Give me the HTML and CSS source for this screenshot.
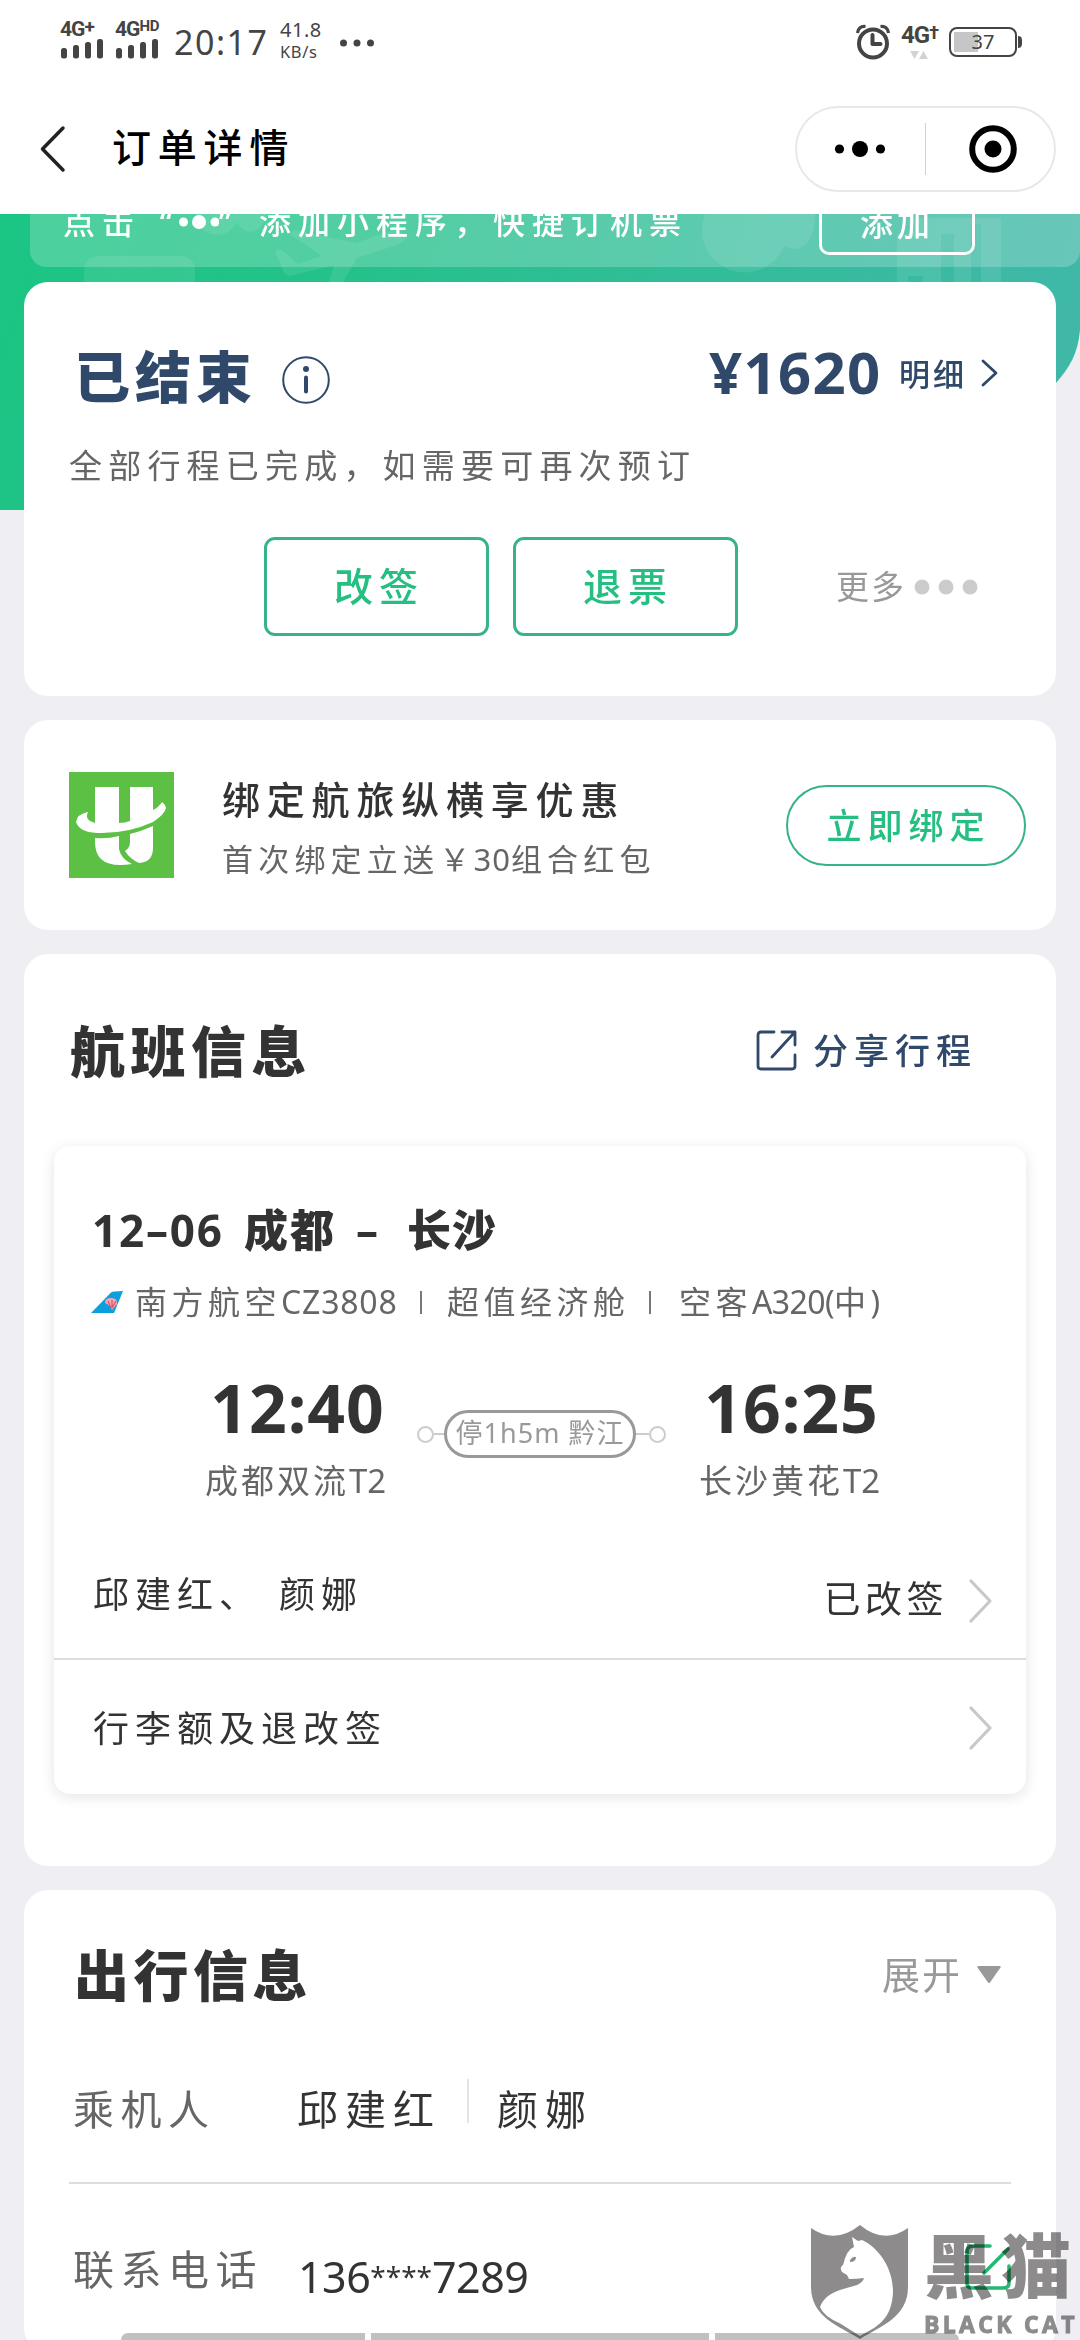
FILE: index.html
```html
<!DOCTYPE html>
<html lang="zh-CN">
<head>
<meta charset="utf-8">
<title>订单详情</title>
<link rel="stylesheet" href="styles.css">
</head>
<body>
<div class="screen">
  <header class="top">
    <div class="status">
      <div class="net net-a">
        <span class="net-label">4G<sup>+</sup></span>
        <svg width="44" height="20" viewBox="0 0 44 20" fill="#444"><rect x="1" y="9" width="6" height="10.500" rx="2.500"/><rect x="13" y="6" width="6" height="13.500" rx="2.500"/><rect x="25" y="3" width="6" height="16.500" rx="2.500"/><rect x="37" y="0" width="6" height="19.500" rx="2.500"/></svg>
      </div>
      <div class="net net-b">
        <span class="net-label">4G<sup>HD</sup></span>
        <svg width="44" height="20" viewBox="0 0 44 20" fill="#444"><rect x="1" y="9" width="6" height="10.500" rx="2.500"/><rect x="13" y="6" width="6" height="13.500" rx="2.500"/><rect x="25" y="3" width="6" height="16.500" rx="2.500"/><rect x="37" y="0" width="6" height="19.500" rx="2.500"/></svg>
      </div>
      <span class="clock">20:17</span>
      <span class="rate"><span class="rate-num">41.8</span><span class="rate-unit">KB/s</span></span>
      <svg class="more-dots" width="36" height="10" fill="#444"><circle cx="4.500" cy="5" r="3.500"/><circle cx="18" cy="5" r="3.500"/><circle cx="31.500" cy="5" r="3.500"/></svg>
      <svg class="alarm" width="36" height="36" viewBox="0 0 36 36" fill="none" stroke="#444"><circle cx="18" cy="19.500" r="14" stroke-width="4"/><path d="M17.500 11v9h8" stroke-width="4" stroke-linejoin="round" stroke-linecap="round"/><path d="M2.500 9C3 4 6 2 10.500 2.500M25.500 2.500C30 2 33 4 33.500 9" stroke-width="3.200"/></svg>
      <div class="data">
        <span class="data-label">4G<sup>†</sup></span>
        <svg width="20" height="10" fill="#d2d2d2"><path d="M1 1h9l-4.500 8zM10 9h9l-4.500-8z"/></svg>
      </div>
      <div class="battery"><span>37</span></div>
    </div>
    <nav class="nav">
      <svg class="back" width="28" height="50" viewBox="0 0 28 50" fill="none" stroke="#222" stroke-width="3.500" stroke-linecap="round" stroke-linejoin="round"><path d="M24 4 3.500 25 24 46"/></svg>
      <h1 class="nav-title">订单详情</h1>
      <div class="capsule">
        <svg width="128" height="50"><circle cx="42.500" cy="25" r="4.600"/><circle cx="63" cy="25" r="8"/><circle cx="83.500" cy="25" r="4.600"/></svg>
        <i class="capsule-line"></i>
        <svg width="128" height="50"><circle cx="67" cy="25" r="20.800" fill="none" stroke="#000" stroke-width="6"/><circle cx="67" cy="25" r="8.500"/></svg>
      </div>
    </nav>
  </header>

  <svg class="hero" width="1080" height="296" viewBox="0 0 1080 296">
    <defs><linearGradient id="sky" x1="0" x2="1" y1="0" y2=".1"><stop offset="0" stop-color="#1bc583"/><stop offset=".35" stop-color="#25c18b"/><stop offset="1" stop-color="#3fb8a8"/></linearGradient></defs>
    <path fill="url(#sky)" d="M0 0H1080V116C1078 139 1070 153 1056 169L900 296H0Z"/>
    <g fill="#fff" fill-opacity=".09">
      <rect x="84" y="42" width="111" height="60" rx="14"/>
      <path d="M195 0a22 22 0 0 0 42 8c6 14 24 14 30-8z"/>
      <path d="M275 38q4-5 9 0l14 12 24-8-34-23q6-4 12-2l56 12 34-12q13-1 16 6-2 6-12 9l-37 12-14 24h-14l5-17-44 11q-6 0-8-8z"/>
      <path d="M705 0a42 42 0 0 0 79 32c17 9 31-2 31-32z"/>
      <path d="M897 20h12v-16h92v64h-20V10h-10v58h-17V20h-13v48h-18V62h-15v6h-11z"/>
    </g>
  </svg>

  <main class="page">
    <section class="notice">
      <p class="notice-text">点击<span class="quote-open">“</span><svg width="40" height="16" fill="#fff"><circle cx="4.500" cy="8" r="4.500"/><circle cx="20" cy="8" r="7"/><circle cx="36" cy="8" r="4.500"/></svg><span class="quote-close">”</span>添加小程序，快捷订机票</p>
      <button class="notice-btn">添加</button>
    </section>

    <section class="card order">
      <div class="order-head">
        <h2 class="order-state">已结束</h2>
        <svg class="info" width="48" height="48" fill="none" stroke="#30496a" stroke-width="2"><circle cx="24" cy="24" r="22.800"/><circle cx="24" cy="13" r="3" fill="#30496a" stroke="none"/><path d="M24 21.500v14" stroke-width="4" stroke-linecap="round"/></svg>
        <span class="price">¥1620</span>
        <span class="detail">明细</span>
        <svg width="18" height="30" fill="none" stroke="#30496a" stroke-width="2.800" stroke-linecap="round" stroke-linejoin="round"><path d="M2 3 15 15 2 27"/></svg>
      </div>
      <p class="order-desc">全部行程已完成，如需要可再次预订</p>
      <div class="actions">
        <button class="btn">改签</button>
        <button class="btn">退票</button>
        <span class="more">更多</span>
        <svg width="66" height="18" fill="#ccc"><circle cx="9" cy="9" r="7.500"/><circle cx="33" cy="9" r="7.500"/><circle cx="57" cy="9" r="7.500"/></svg>
      </div>
    </section>

    <section class="card bind">
      <svg width="105" height="106" viewBox="0 0 105 106"><path fill="#5bc044" d="M0 0h105v106H0z"/><g fill="#fff"><path d="M26 15h24v36q6 0 11-2V15h23v23q6-3 9-8l1 1q3 2 3 5Q96 42 84 50 58 62 28 61 10 60 7 50q1-8 12-10-3 6 2 9l5 2z"/><path d="M26 66q13 1 24-2v13q2 10 13 15-37 6-37-22zM61 62q12-3 23-8v22q0 14-14 15-9-4-14-12 5-3 5-9z"/></g></svg>
      <div class="bind-text">
        <h3>绑定航旅纵横享优惠</h3>
        <p>首次绑定立送￥<span class="num">30</span>组合红包</p>
      </div>
      <button class="bind-btn">立即绑定</button>
    </section>

    <section class="card flight">
      <div class="section-head">
        <h2>航班信息</h2>
        <svg class="share-icon" width="42" height="42" viewBox="0 0 42 42" fill="none" stroke="#30496a" stroke-width="2.800" stroke-linecap="round" stroke-linejoin="round"><path d="M18 2H5Q2 2 2 5v31q0 3 3 3h31q3 0 3-3V25M26 2h13v13M38 3 16 27"/></svg>
        <span class="share">分享行程</span>
      </div>
      <div class="ticket">
        <h3 class="trip"><span>12–06</span><span>成都</span><span>–</span><span>长沙</span></h3>
        <div class="meta">
          <svg width="34" height="24" viewBox="0 0 34 24"><path fill="#0aa0dc" d="M1 23 21 2.500Q23 1 33 1L24 23z"/><path fill="#f3a6b6" d="M15 13q0-5 6-5 7 0 6 6l-5 6q-2-5-7-7z"/><path d="m18 11 3 7m1-8v7m4-6-4 7" stroke="#e05263" stroke-width="1.200" fill="none"/></svg>
          <span class="m1">南方航空<span class="num">CZ3808</span></span><i></i><span class="m2">超值经济舱</span><i></i><span class="m3">空客<span class="num">A320(</span>中<span class="num">)</span></span>
        </div>
        <div class="route">
          <div class="stop"><b>12:40</b><span>成都双流<em>T2</em></span></div>
          <div class="via"><i></i><u></u><span>停<em>1h5m</em> 黔江</span><u></u><i></i></div>
          <div class="stop"><b>16:25</b><span>长沙黄花<em>T2</em></span></div>
        </div>
        <div class="line people"><span>邱建红、<span class="second">颜娜</span></span><span class="changed">已改签</span><svg width="26" height="46" fill="none" stroke="#c8c8c8" stroke-width="3.200" stroke-linecap="round" stroke-linejoin="round"><path d="M4 3 23 23 4 43"/></svg></div>
        <div class="line rules"><span>行李额及退改签</span><svg width="26" height="46" fill="none" stroke="#c8c8c8" stroke-width="3.200" stroke-linecap="round" stroke-linejoin="round"><path d="M4 3 23 23 4 43"/></svg></div>
      </div>
    </section>

    <section class="card travel">
      <div class="section-head">
        <h2>出行信息</h2>
        <span class="expand">展开</span>
        <svg width="24" height="18" fill="#999"><path d="M1 0h22q1 0 .5 1.500L13 16.500q-1 1-2 0L.5 1.500Q0 0 1 0z"/></svg>
      </div>
      <div class="field">
        <span class="label">乘机人</span><span class="value">邱建红</span><i></i><span class="value">颜娜</span>
      </div>
      <div class="field phone">
        <span class="label">联系电话</span><span class="tel">136<span class="stars">****</span>7289</span>
        <svg class="edit" width="46" height="48" fill="none" stroke="#25b872" stroke-width="3.600" stroke-linecap="round" stroke-linejoin="round"><path d="M25 3H8Q2 3 2 9v31q0 5 5 5h31q6 0 6-5V23M19 30 43 6"/></svg>
      </div>
    </section>
  </main>

  <div class="gesture"><i></i><i></i><i></i></div>

  <div class="mark">
    <svg width="98" height="115" viewBox="0 0 98 115"><path fill="#8d8b8c" d="M0 3Q24 20 49 0 73 20 97 3V62C97 92 70 101 49 114 28 101 0 92 0 62Z"/><path fill="#fff" d="m41 12 6 4 4-1C68 23 82 43 82 67 81 88 73 96 63 103L49 111 30 99Q12 91 9 82C15 66 34 64 46 60Q52 57 53 53 46 54 38 54L36 50 31 47Q28 42 32 40 36 24 43 22z"/><path fill="#8d8b8c" d="M39 35q3-4 6-3 0 5-6 5z"/></svg>
    <div class="mark-text"><span class="mark-cn">黑猫</span><span class="mark-en">BLACK CAT</span></div>
  </div>
</div>
</body>
</html>
```

FILE: styles.css
```css
* { box-sizing: border-box; }
html, body, h1, h2, h3, p { margin: 0; padding: 0; }
body { width: 1080px; height: 2340px; overflow: hidden; background: #efeef3; }
i, em { font-style: normal; }
u { text-decoration: none; }
svg { display: block; flex: none; }
button { background: none; padding: 0; font: inherit; color: inherit; text-align: center; flex: none; }

.screen {
  position: relative;
  width: 1080px;
  height: 2340px;
  overflow: hidden;
  background: #efeef3;
  font-family: "Noto Sans", "Noto Sans CJK SC", sans-serif;
  color: #333;
  white-space: nowrap;
}

.top { position: relative; z-index: 2; height: 214px; background: #fff; }
.status { display: flex; align-items: center; height: 84px; padding-left: 60px; color: #444; }
.net { display: flex; flex-direction: column; gap: 1px; width: 55px; margin-top: -5px; }
.net-label { height: 17px; font: 700 21px/17px Roboto, sans-serif; letter-spacing: -1px; }
.net sup { font-size: 15px; line-height: 10px; vertical-align: 5px; letter-spacing: -.3px; }
.net-a sup { font-size: 19px; vertical-align: 3px; }
.clock { width: 106px; margin-left: 4px; font-size: 34px; letter-spacing: 1.500px; line-height: 40px; }
.rate { display: flex; flex-direction: column; width: 58px; gap: 4px; }
.rate-num { font-size: 20px; line-height: 18px; margin-top: -2px; letter-spacing: .5px; }
.rate-unit { font-size: 16.500px; line-height: 18px; letter-spacing: .6px; }
.more-dots { margin-top: 2px; margin-left: 1px; }
.alarm { margin-left: 480px; }
.data { display: flex; flex-direction: column; width: 48px; padding-left: 10px; gap: 5px; }
.data-label { font: 700 24px/20px Roboto, sans-serif; letter-spacing: -1px; height: 20px; }
.data-label sup { font-size: 18px; line-height: 10px; vertical-align: 4px; }
.data svg { margin-left: 8px; }
.battery {
  position: relative;
  display: flex; align-items: center; justify-content: center;
  width: 68px; height: 30px; margin-left: 10px;
  border: 2.500px solid #444; border-radius: 8px;
  background: linear-gradient(#c6c6c6, #c6c6c6) 3px center / 24px 20px no-repeat;
  font-size: 20px; line-height: 20px;
}
.battery::after { content: ""; position: absolute; right: -7px; top: 7px; width: 4px; height: 12px; background: #444; border-radius: 0 4px 4px 0; }

.nav { display: flex; align-items: center; height: 130px; padding: 0 24px 0 39px; }
.nav-title { margin-left: 45px; margin-top: -4px; font-size: 39px; line-height: 50px; font-weight: 500; color: #000; letter-spacing: 6.800px; }
.capsule { display: flex; align-items: center; width: 261px; height: 86px; margin-left: auto; border: 2px solid #e8e8e8; border-radius: 43px; }
.capsule-line { flex: none; width: 1px; height: 52px; background: #d0d0d0; }

.hero { position: absolute; left: 0; top: 214px; }

.page { position: relative; padding: 0 24px; }
.notice {
  display: flex; align-items: center; height: 90px; margin: -37px -24px 15px 6px;
  padding: 0 105px 0 33px; border-radius: 16px; background: rgba(255,255,255,.21); color: #fff;
}
.notice-text { display: flex; align-items: center; flex: 1; font-size: 32px; letter-spacing: 7px; line-height: 40px; font-weight: 500; }
.quote-open { width: 38px; text-align: right; }
.quote-close { width: 40px; }
.notice-btn { width: 156px; height: 66px; border: 3px solid #fff; border-radius: 10px; font-size: 33px; font-weight: 500; letter-spacing: 4px; }

.card { margin-bottom: 24px; border-radius: 24px; background: #fff; }
.order { height: 414px; padding: 56px 0 0 45px; }
.order-head { display: flex; align-items: center; height: 76px; color: #30496a; }
.order-state { width: 213px; padding-left: 5px; font-size: 56px; line-height: 76px; letter-spacing: 5px; font-weight: 900; }
.order-head .info { margin-top: 8px; }
.price { width: 190px; margin-left: 379px; margin-top: -9px; font-size: 58px; font-weight: 700; line-height: 70px; letter-spacing: 1.300px; }
.detail { width: 82px; margin-top: -8px; font-size: 31px; font-weight: 500; letter-spacing: 3px; }
.order-head > svg:last-child { margin-top: -7px; }
.order-desc { margin-top: 29px; font-size: 33px; line-height: 46px; letter-spacing: 6.200px; color: #666; }
.actions { display: flex; align-items: center; height: 99px; margin-top: 48px; padding-left: 195px; }
.btn { width: 225px; height: 99px; margin-right: 24px; padding: 0 0 5px 5px; border: 3px solid #36b389; border-radius: 11px; color: #25bf81; font-size: 39px; letter-spacing: 6px; font-weight: 500; }
.more { width: 77px; margin-left: 74px; margin-top: -3px; font-size: 33px; letter-spacing: 2px; color: #999; }

.bind { display: flex; align-items: center; height: 210px; padding: 0 30px 0 45px; }
.bind-text { flex: 1; padding-left: 48px; padding-top: 5px; }
.bind h3 { font-size: 38px; line-height: 60px; letter-spacing: 6.800px; font-weight: 500; }
.bind p { font-size: 31px; line-height: 54px; letter-spacing: 5.200px; color: #666; padding-top: 3px; }
.bind .num { letter-spacing: 1px; margin-left: -2px; }
.bind-btn { width: 240px; height: 81px; padding: 0 0 3px 5px; border: 2px solid #36b389; border-radius: 41px; color: #25bf81; font-size: 35px; letter-spacing: 6px; font-weight: 500; }

.section-head { display: flex; align-items: center; }
.section-head h2 { font-size: 55px; line-height: 76px; letter-spacing: 5.500px; font-weight: 900; }
.flight { height: 912px; padding: 0 30px; }
.flight .section-head { height: 192px; padding-left: 16px; padding-top: 2px; }
.share-icon { margin-left: 444px; }
.flight h2 { width: 242px; }
.share { margin-left: 15px; margin-top: -5px; font-size: 35px; letter-spacing: 6px; color: #30496a; font-weight: 500; }

.ticket { height: 648px; border-radius: 16px; background: #fff; box-shadow: 0 3px 14px rgba(0,0,0,.11); }
.trip { display: flex; height: 118px; padding: 52px 0 0 38px; font-size: 44px; line-height: 64px; font-weight: 700; }
.trip span:nth-child(1) { width: 152px; letter-spacing: 1.800px; }
.trip span:nth-child(2) { width: 112px; letter-spacing: 2px; font-weight: 900; }
.trip span:nth-child(3) { width: 51px; }
.trip span:nth-child(4) { letter-spacing: 1px; font-weight: 900; }
.meta { display: flex; align-items: center; height: 76px; padding-left: 36px; font-size: 32px; line-height: 40px; color: #666; letter-spacing: 4.500px; }
.meta .num { letter-spacing: .8px; }
.meta .m3 .num { letter-spacing: -.6px; }
.meta .m1 { width: 284px; padding-left: 11px; }
.meta i { width: 2px; height: 23px; margin-left: 12px; background: #777; }
.meta .m2 { width: 203px; padding-left: 25px; }
.meta .m3 { padding-left: 28px; }
.meta i + .m2 + i { margin-left: 24px; }
.route { display: flex; padding-left: 152px; height: 194px; padding-top: 28px; }
.stop { width: 179px; display: flex; flex-direction: column; align-items: center; }
.stop b { margin-top: -1px; padding-left: 4px; font-size: 66px; line-height: 80px; letter-spacing: 1px; }
.stop span { font-size: 33px; line-height: 44px; margin-top: 12px; color: #666; letter-spacing: 3px; }
.stop em { letter-spacing: 0; }
.via { display: flex; align-items: center; height: 48px; width: 315px; padding-left: 32px; margin-top: 42px; }
.via i { flex: none; width: 17px; height: 17px; border: 2.500px solid #ccc; border-radius: 50%; }
.via u { flex: none; width: 10px; height: 2px; background: #ccc; }
.via u:nth-of-type(2) { width: 13px; }
.via span { flex: none; width: 192px; height: 48px; border: 3px solid #999; border-radius: 24px; color: #999; font-size: 27px; line-height: 40px; text-align: center; letter-spacing: 1px; }
.line { display: flex; align-items: center; padding: 0 33px 0 39px; font-size: 36px; letter-spacing: 6px; }
.line .second { margin-left: 18px; }
.people { height: 126px; padding-bottom: 8px; border-bottom: 2px solid #ddd; }
.changed { margin-left: auto; font-size: 37px; letter-spacing: 4.500px; padding-top: 9px; }
.people svg { margin-top: 17px; margin-left: 19px; }
.rules { height: 134px; padding-top: 1px; justify-content: space-between; }
.rules span { margin-top: -3px; }

.travel { height: 462px; padding: 0 45px; }
.travel .section-head { height: 170px; padding-left: 5px; }
.travel h2 { width: 808px; letter-spacing: 4.500px; }
.expand { width: 95px; margin-top: -6px; font-size: 38px; color: #999; letter-spacing: 2px; }
.field { display: flex; align-items: center; height: 124px; padding-bottom: 28px; border-bottom: 2px solid #ddd; font-size: 41px; }
.field .label { width: 228px; padding-left: 4px; color: #666; letter-spacing: 6.500px; }
.field .value { letter-spacing: 7px; }
.field i { width: 2px; height: 44px; margin: -12px 28px 0 26px; background: #e4e4e4; }
.phone { height: 160px; padding: 6px 0 0; border: 0; }
.tel { padding-top: 20px; font-size: 43px; line-height: 58px; letter-spacing: -.5px; }
.tel .stars { font-size: 28px; line-height: 28px; letter-spacing: 0; vertical-align: 6px; }
.field.phone .label { font-size: 41px; width: 229px; }
.edit { margin-left: auto; }

.gesture { position: absolute; left: 121px; top: 2333px; display: flex; gap: 6px; width: 838px; height: 14px; background: #fff; border-radius: 7px; overflow: hidden; }
.gesture i { background: #c0c0c0; flex: 0 0 244px; }
.gesture i:nth-child(2) { flex-basis: 338px; }

.mark { position: absolute; left: 811px; top: 2225px; display: flex; gap: 15px; color: #8d8b8c; mix-blend-mode: multiply; }
.mark-text { display: flex; flex-direction: column; }
.mark-cn { height: 87px; font: 900 70px/76px "Noto Sans CJK SC", sans-serif; letter-spacing: 7px; }
.mark-en { font: 700 23px/24px "Open Sans", sans-serif; letter-spacing: 3.300px; -webkit-text-stroke: 1px #8d8b8c; }
```
